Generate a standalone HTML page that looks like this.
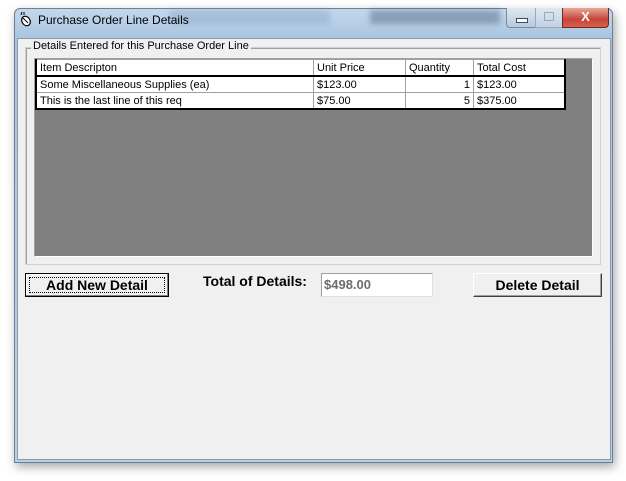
<!DOCTYPE html>
<html><head><style>
body{margin:0;width:626px;height:481px;background:#fff;position:relative;overflow:hidden;font-family:"Liberation Sans",sans-serif;}
.abs{position:absolute;}
.win{left:14px;top:8px;width:597px;height:453px;background:linear-gradient(#c4d8ec,#a9c4e0 30px,#b9d1e8);border:1px solid #6d7f95;border-radius:6px 6px 0 0;box-shadow:2px 4px 10px rgba(0,0,0,.35);}
.client{left:17px;top:38px;width:592px;height:420px;background:#f0f0f0;border:1px solid #8a9bb0;}
.t{font-size:12px;color:#000;}
table{border-collapse:collapse;font-size:11px;}
td{border:1px solid #a0a0a0;height:15px;padding:0 3px;white-space:nowrap;}
.btn{background:#f0f0f0;border:1px solid;border-color:#fff #404040 #404040 #fff;box-shadow:inset -1px -1px 0 #a0a0a0;font-size:14px;font-weight:bold;text-align:center;line-height:22px;}
</style></head><body>
<div class="abs win"></div>
<div class="abs" style="left:170px;top:10px;width:160px;height:14px;background:rgba(120,150,190,.35);filter:blur(3px)"></div>
<div class="abs" style="left:370px;top:10px;width:130px;height:14px;background:rgba(60,80,110,.4);filter:blur(3px)"></div>
<svg class="abs" style="left:18px;top:11px" width="16" height="16" viewBox="0 0 16 16"><path d="M4 1 L3 4 M6 1 L6 4" stroke="#000" fill="none"/><ellipse cx="8" cy="10" rx="4" ry="5" transform="rotate(-35 8 10)" fill="#fff" stroke="#000" stroke-width="1.2"/><path d="M5 7 L10 12" stroke="#000"/></svg>
<div class="abs t" style="left:38px;top:13px;font-size:12px">Purchase Order Line Details</div>
<div class="abs" style="left:506px;top:8px;width:28px;height:19px;border:1px solid #7a8a9e;border-top:none;border-radius:0 0 0 4px;background:linear-gradient(#dfe8f2,#b7c9dd)"><div class="abs" style="left:9px;top:10px;width:10px;height:3px;background:#fff;border:1px solid #3c4b5f"></div></div>
<div class="abs" style="left:535px;top:8px;width:26px;height:19px;border:1px solid #9aaabb;border-top:none;background:linear-gradient(#dfe8f2,#c2d2e3)"><div class="abs" style="left:8px;top:4px;width:8px;height:7px;border:1px solid #9aaabb"></div></div>
<div class="abs" style="left:562px;top:8px;width:45px;height:19px;border:1px solid #6b2a22;border-top:none;border-radius:0 0 4px 0;background:linear-gradient(#e8a797,#c6453a 60%,#d8604a);color:#fff;font-weight:bold;font-size:13px;text-align:center;line-height:18px">X</div>
<div class="abs client"></div>
<div class="abs" style="left:25px;top:47px;width:574px;height:216px;border:1px solid #d0d0d0;box-shadow:inset 1px 1px 0 #a0a0a0"></div>
<div class="abs t" style="left:31px;top:40px;background:#f0f0f0;padding:0 2px;font-size:11px">Details Entered for this Purchase Order Line</div>
<div class="abs" style="left:34px;top:58px;width:557px;height:197px;background:#808080;border:1px solid #a0a0a0;border-right-color:#fff;border-bottom-color:#fff"></div>
<table class="abs" style="left:35px;top:59px;background:#fff;border:2px solid #000;border-top:1px solid #000;width:531px">
<tr><td style="width:270px">Item Descripton</td><td style="width:85px">Unit Price</td><td style="width:61px">Quantity</td><td>Total Cost</td></tr>
<tr style="border-top:2px solid #000"><td>Some Miscellaneous Supplies (ea)</td><td>$123.00</td><td style="text-align:right">1</td><td>$123.00</td></tr>
<tr><td>This is the last line of this req</td><td>$75.00</td><td style="text-align:right">5</td><td>$375.00</td></tr>
</table>
<div class="abs btn" style="left:25px;top:273px;width:142px;height:22px;border:1px solid #000;box-shadow:inset -1px -1px 0 #808080,inset 1px 1px 0 #fff;"><div style="margin:3px;border:1px dotted #000;line-height:14px">Add New Detail</div></div>
<div class="abs t" style="left:203px;top:273px;font-size:14px;font-weight:bold">Total of Details:</div>
<div class="abs" style="left:321px;top:273px;background:#fff;border:1px solid #a0a0a0;border-right-color:#e0e0e0;border-bottom-color:#e0e0e0;font-size:13px;color:#6d6d6d;font-weight:bold;line-height:22px;padding-left:2px;box-sizing:border-box;width:112px;height:24px">$498.00</div>
<div class="abs btn" style="left:473px;top:273px;width:127px;height:22px">Delete Detail</div>
</body></html>
